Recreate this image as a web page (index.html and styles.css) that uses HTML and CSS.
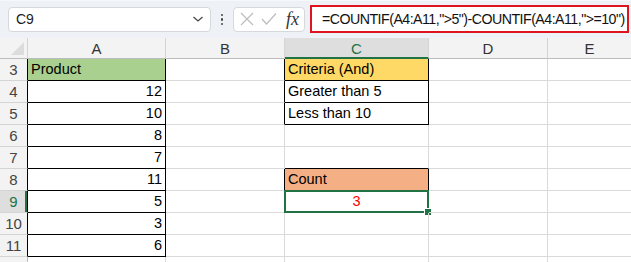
FILE: index.html
```html
<!DOCTYPE html>
<html>
<head>
<meta charset="utf-8">
<link rel="stylesheet" href="styles.css">
</head>
<body>
<div class="app">
  <div class="fbar">
    <div class="namebox">
      <span class="nb-text">C9</span>
      <svg class="chev" width="12" height="8" viewBox="0 0 12 8"><path d="M1.5 2 L6 6 L10.5 2" fill="none" stroke="#444" stroke-width="1.2"/></svg>
    </div>
    <div class="vdots"><span></span><span></span><span></span></div>
    <div class="fxbox">
      <svg width="14" height="14" viewBox="0 0 14 14"><path d="M1 1 L13 13 M13 1 L1 13" stroke="#bdbdbd" stroke-width="1.2" fill="none"/></svg>
      <svg width="16" height="14" viewBox="0 0 16 14"><path d="M1 7 L5.5 12 L15 1.5" stroke="#bdbdbd" stroke-width="1.2" fill="none"/></svg>
      <span class="fx">fx</span>
    </div>
    <div class="formula">=COUNTIF(A4:A11,"&gt;5")-COUNTIF(A4:A11,"&gt;=10")</div>
  </div>
  <div class="sheet">
    <div class="corner"><div class="tri"></div></div>
    <div class="ch">A</div>
    <div class="ch">B</div>
    <div class="ch sel">C</div>
    <div class="ch">D</div>
    <div class="ch last">E</div>

    <div class="rh br">3</div>
    <div class="c br bb hdr-g">Product</div>
    <div class="c br"></div>
    <div class="c br bb hdr-y">Criteria (And)</div>
    <div class="c"></div>
    <div class="c last"></div>

    <div class="rh br">4</div>
    <div class="c br bb num">12</div>
    <div class="c br"></div>
    <div class="c br bb">Greater than 5</div>
    <div class="c"></div>
    <div class="c last"></div>

    <div class="rh br">5</div>
    <div class="c br bb num">10</div>
    <div class="c br"></div>
    <div class="c br bb">Less than 10</div>
    <div class="c"></div>
    <div class="c last"></div>

    <div class="rh br">6</div>
    <div class="c br bb num">8</div>
    <div class="c"></div>
    <div class="c"></div>
    <div class="c"></div>
    <div class="c last"></div>

    <div class="rh br">7</div>
    <div class="c br bb num">7</div>
    <div class="c"></div>
    <div class="c bb"></div>
    <div class="c"></div>
    <div class="c last"></div>

    <div class="rh br">8</div>
    <div class="c br bb num">11</div>
    <div class="c br"></div>
    <div class="c br bb hdr-o">Count</div>
    <div class="c"></div>
    <div class="c last"></div>

    <div class="rh sel br">9</div>
    <div class="c br bb num">5</div>
    <div class="c"></div>
    <div class="c result">3<div class="selbox"><div class="handle"></div></div></div>
    <div class="c"></div>
    <div class="c last"></div>

    <div class="rh br">10</div>
    <div class="c br bb num">3</div>
    <div class="c"></div>
    <div class="c"></div>
    <div class="c"></div>
    <div class="c last"></div>

    <div class="rh br">11</div>
    <div class="c br bb num">6</div>
    <div class="c"></div>
    <div class="c"></div>
    <div class="c"></div>
    <div class="c last"></div>

    <div class="rh"></div>
    <div class="c"></div>
    <div class="c"></div>
    <div class="c"></div>
    <div class="c"></div>
    <div class="c last"></div>
  </div>
</div>
</body>
</html>
```
FILE: styles.css
```css
html, body { margin: 0; padding: 0; background: #fff; }
.app { width: 631px; height: 262px; overflow: hidden; font-family: "Liberation Sans", Arial, sans-serif; }

.fbar {
  height: 38px;
  background: #eef1f5;
  box-sizing: border-box;
  border-top: 1px solid #f7f8fa;
  display: flex;
  align-items: center;
  padding-left: 8px;
}
.namebox {
  width: 203px; height: 25px; box-sizing: border-box;
  background: #fff; border: 1px solid #d5d8dc; border-radius: 4px;
  display: flex; align-items: center; justify-content: space-between;
  padding: 0 6px 0 7px; margin-top: -1px;
}
.nb-text { font-size: 14px; color: #222; }
.vdots { width: 22px; display: flex; flex-direction: column; align-items: center; gap: 2px; }
.vdots span { width: 2.5px; height: 2.5px; background: #444; border-radius: 50%; }
.fxbox {
  width: 72px; height: 25px; box-sizing: border-box;
  background: #fff; border: 1px solid #d5d8dc; border-radius: 4px;
  display: flex; align-items: center; gap: 7px; padding-left: 6px; margin-top: -1px;
}
.fx { font-family: "Liberation Serif", serif; font-style: italic; font-size: 18px; color: #333; margin-left: 2px; }
.formula {
  margin-left: 5px; width: 319px; height: 28px; box-sizing: border-box;
  border: 2px solid #e0141e; background: #fff;
  font-size: 14.2px; letter-spacing: -0.52px; color: #111; padding-left: 10px; line-height: 24px;
  white-space: nowrap; overflow: hidden; margin-top: -1px;
}

.sheet {
  display: grid;
  grid-template-columns: 28px 138px 119px 144px 119px 83px;
  grid-template-rows: 21px repeat(10, 22px);
  font-size: 14.5px;
}
.corner { background: #f3f3f3; border-right: 1px solid #d4d4d4; border-bottom: 1px solid #bcbcbc; position: relative; }
.tri { position: absolute; right: 3px; bottom: 3px; width: 0; height: 0; border-left: 13px solid transparent; border-bottom: 13px solid #dcdcdc; }
.ch {
  background: #f3f3f3; border-right: 1px solid #d4d4d4; border-bottom: 1px solid #bcbcbc;
  color: #333; text-align: center; line-height: 21px; font-size: 15px;
}
.ch.sel { background: #dedede; color: #217346; border-bottom: 2px solid #217346; line-height: 22px; }
.ch.last { border-right: none; }
.rh {
  background: #f3f3f3; border-right: 1px solid #bcbcbc; border-bottom: 1px solid #d4d4d4;
  color: #444; text-align: center; line-height: 21px; font-size: 15px;
}
.rh.sel { background: #dedede; color: #217346; box-shadow: inset -2px 0 0 #217346; }
.c {
  border-right: 1px solid #dadada; border-bottom: 1px solid #dadada;
  line-height: 21px; padding: 0 3px; color: #000; white-space: nowrap; position: relative;
}
.c.last { border-right: none; }
.br { border-right-color: #000 !important; }
.bb { border-bottom-color: #000 !important; }
.num { text-align: right; }
.hdr-g { background: #a9d08e; }
.hdr-y { background: #ffd966; }
.hdr-o { background: #f4b084; }
.result { text-align: center; color: #ff0000; }
.selbox {
  position: absolute; left: -1px; top: -1px; right: -1px; bottom: -1px;
  border: 2px solid #217346;
}
.handle {
  position: absolute; right: -5px; bottom: -5px; width: 6px; height: 6px;
  background: #217346; border: 1px solid #fff;
}
```
